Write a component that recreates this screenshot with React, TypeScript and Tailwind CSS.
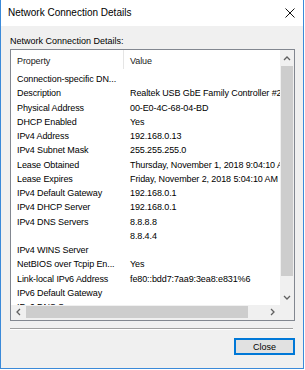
import React from "react";

type Row = [string, string];

// Property / value pairs as they show in the list (property column is cut off by the header width)
const ROWS: Row[] = [
  ["Connection-specific DN...", ""],
  ["Description", "Realtek USB GbE Family Controller #2"],
  ["Physical Address", "00-E0-4C-68-04-BD"],
  ["DHCP Enabled", "Yes"],
  ["IPv4 Address", "192.168.0.13"],
  ["IPv4 Subnet Mask", "255.255.255.0"],
  ["Lease Obtained", "Thursday, November 1, 2018 9:04:10 AM"],
  ["Lease Expires", "Friday, November 2, 2018 5:04:10 AM"],
  ["IPv4 Default Gateway", "192.168.0.1"],
  ["IPv4 DHCP Server", "192.168.0.1"],
  ["IPv4 DNS Servers", "8.8.8.8"],
  ["", "8.8.4.4"],
  ["IPv4 WINS Server", ""],
  ["NetBIOS over Tcpip En...", "Yes"],
  ["Link-local IPv6 Address", "fe80::bdd7:7aa9:3ea8:e831%6"],
  ["IPv6 Default Gateway", ""],
  ["IPv6 DNS Servers", ""],
];

function Chevron({ dir }: { dir: "up" | "down" | "left" | "right" }) {
  const d =
    dir === "up"
      ? "M1 5 L4 2 L7 5"
      : dir === "down"
      ? "M1 2 L4 5 L7 2"
      : dir === "left"
      ? "M5 1 L2 4 L5 7"
      : "M2 1 L5 4 L2 7";
  const w = dir === "up" || dir === "down" ? 8 : 7;
  const h = dir === "up" || dir === "down" ? 7 : 8;
  return (
    <svg width={w} height={h} viewBox={`0 0 ${w} ${h}`} fill="none">
      <path d={d} stroke="#606060" strokeWidth="1.3" />
    </svg>
  );
}

function VScroll() {
  return (
    <div className="flex flex-col w-[14px] bg-[#f0f0f0]">
      <div className="flex items-center justify-center h-[16px]">
        <Chevron dir="up" />
      </div>
      <div className="h-[210px] mx-[1px] bg-[#cdcdcd]" />
      <div className="h-[13px]" />
      <div className="flex items-center justify-center h-[16px]">
        <Chevron dir="down" />
      </div>
    </div>
  );
}

function HScroll() {
  return (
    <div className="flex w-[269px] h-[14px] bg-[#f0f0f0]">
      <div className="flex items-center justify-center w-[15px]">
        <Chevron dir="left" />
      </div>
      <div className="w-[222px] my-[1px] bg-[#cdcdcd]" />
      <div className="w-[16px]" />
      <div className="flex items-center justify-center w-[16px]">
        <Chevron dir="right" />
      </div>
    </div>
  );
}

export default function App() {
  return (
    <div className="w-[305px] h-[370px] bg-white text-black font-['Liberation_Sans',Arial,sans-serif]">
      <div className="flex flex-col w-[304px] h-[369px] border-x border-b border-[#3b8ad9]">
        <div className="flex items-center justify-between h-[26px] pl-[7px] pr-[8px] bg-white">
          <span className="text-[10px] leading-[12px]">Network Connection Details</span>
          <svg width="10" height="10" viewBox="0 0 10 10" fill="none">
            <path d="M0.5 0.5 L9.5 9.5 M9.5 0.5 L0.5 9.5" stroke="#111" strokeWidth="1" />
          </svg>
        </div>

        <div className="flex flex-col flex-1 pl-[9px] pr-[8px] pt-[9px] bg-[#f0f0f0]">
          <span className="text-[9px] leading-[12px]">Network Connection Details:</span>

          <div className="flex flex-col w-[285px] h-[272px] mt-[2px] border border-[#828790]">
            <div className="flex h-[255px]">
              <div className="w-[269px] overflow-hidden bg-white text-[9px] leading-[12px] tracking-[-0.1px] whitespace-nowrap">
                <div className="flex items-start h-[22px] text-[#1a1a1a]">
                  <div className="w-[113px] h-[19px] pt-[5px] pl-[6px] border-r border-[#e5e5e5]">
                    Property
                  </div>
                  <div className="pt-[5px] pl-[6px]">Value</div>
                </div>
                {ROWS.map(([prop, value], i) => (
                  <div key={i} className="flex items-center h-[14.25px]">
                    <div className="w-[113px] shrink-0 pl-[6px] overflow-hidden">{prop}</div>
                    <div className="pl-[6px]">{value}</div>
                  </div>
                ))}
              </div>
              <VScroll />
            </div>
            <div className="flex">
              <HScroll />
              <div className="w-[14px] h-[14px] bg-[#f0f0f0]" />
            </div>
          </div>

          <div className="w-[283px] h-[2px] mt-[7px] border-t border-b border-t-[#a0a0a0] border-b-white" />

          <button className="self-end flex items-center justify-center w-[61px] h-[17px] mt-[8px] bg-[#e1e1e1] border-2 border-[#0078d7] text-[9px] leading-[12px]">
            Close
          </button>
        </div>
      </div>
    </div>
  );
}
